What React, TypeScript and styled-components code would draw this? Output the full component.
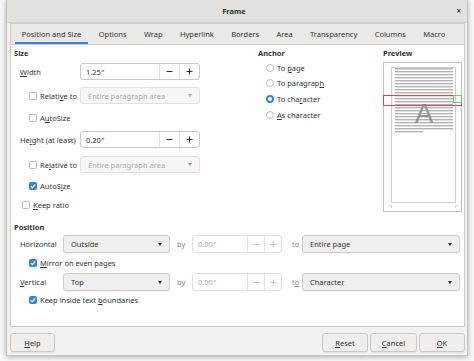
import React from 'react';
import styled, { createGlobalStyle } from 'styled-components';

const Global = createGlobalStyle`
  html, body { margin: 0; padding: 0; }
  body {
    background: #f7f7f7;
    font-family: "Noto Sans", "DejaVu Sans", sans-serif;
    font-size: 7.5px;
    color: #2e3436;
    width: 474px;
    height: 361px;
    overflow: hidden;
  }
`;

const Window = styled.div`
  margin-left: 6px;
  width: 462px;
  height: 356px;
  box-sizing: border-box;
  background: #f2f1f0;
  border: 1px solid #c6c3bf;
  border-top: none;
  box-shadow: 0 1px 5px rgba(0, 0, 0, 0.3);
  display: flex;
  flex-direction: column;
`;

const TitleBar = styled.div`
  height: 22px;
  flex: none;
  display: grid;
  grid-template-columns: 1fr auto 1fr;
  align-items: center;
  background: #e3e1de;
  border-bottom: 1px solid #d4d1cd;
  padding-right: 6px;
`;

const Title = styled.div`
  font-weight: 700;
  font-size: 7.5px;
  grid-column: 2;
`;

const Close = styled.div`
  justify-self: end;
  font-weight: 700;
  font-size: 8px;
  line-height: 8px;
`;

const Notebook = styled.div`
  height: 304px;
  flex: none;
  margin: 0 2px 0 3px;
  box-sizing: border-box;
  border: 1px solid #cfcbc7;
  display: flex;
  flex-direction: column;
`;

const TabStrip = styled.div`
  height: 20px;
  flex: none;
  display: flex;
  background: #ebe9e6;
  border-bottom: 1px solid #d2cfcb;
`;

const Tab = styled.div<{ $active?: boolean }>`
  margin-left: 4px;
  padding: 0 6.7px;
  display: flex;
  align-items: center;
  box-sizing: border-box;
  height: 20px;
  border-bottom: 2px solid ${p => (p.$active ? '#3584e4' : 'transparent')};
  padding-top: 2px;
  color: #2e3436;
  white-space: nowrap;
`;

const Content = styled.div`
  flex: 1;
  background: #ffffff;
  padding: 2px 3px 0 3px;
  display: flex;
  flex-direction: column;
`;

const TopSection = styled.div`
  display: grid;
  grid-template-columns: 244px 125px 78px;
`;

const Column = styled.div`
  display: flex;
  flex-direction: column;
`;

const Heading = styled.div<{ $mt?: number }>`
  font-weight: 700;
  height: 12px;
  line-height: 12px;
  margin-top: ${p => p.$mt ?? 0}px;
`;

const Row = styled.div<{ $mt: number; $h: number; $indent: number }>`
  display: flex;
  align-items: center;
  height: ${p => p.$h}px;
  margin-top: ${p => p.$mt}px;
  padding-left: ${p => p.$indent}px;
  white-space: nowrap;
`;

const FieldLabel = styled.span<{ $w: number; $pl?: number; $muted?: boolean }>`
  width: ${p => p.$w}px;
  padding-left: ${p => p.$pl ?? 0}px;
  box-sizing: border-box;
  flex: none;
  color: ${p => (p.$muted ? '#8b8883' : '#2e3436')};
`;

const U = styled.span`
  text-decoration: underline;
  text-underline-offset: 1px;
  text-decoration-thickness: 0.6px;
`;

const Spin = styled.div<{ $w: number; $disabled?: boolean }>`
  width: ${p => p.$w}px;
  height: 100%;
  box-sizing: border-box;
  display: flex;
  border: 1px solid ${p => (p.$disabled ? '#e0ddda' : '#cdc9c5')};
  border-radius: 3px;
  background: #ffffff;
  flex: none;
`;

const SpinText = styled.div<{ $disabled?: boolean }>`
  flex: 1;
  display: flex;
  align-items: center;
  padding-left: 5px;
  color: ${p => (p.$disabled ? '#b3afab' : '#2e3436')};
`;

const SpinButton = styled.div<{ $w: number }>`
  width: ${p => p.$w}px;
  border-left: 1px solid #e3e0dd;
  display: flex;
  align-items: center;
  justify-content: center;
`;

const Select = styled.div<{ $w: number; $disabled?: boolean }>`
  width: ${p => p.$w}px;
  height: 100%;
  box-sizing: border-box;
  flex: none;
  display: flex;
  align-items: center;
  justify-content: space-between;
  padding: 0 7px;
  border: 1px solid ${p => (p.$disabled ? '#e2dfdc' : '#cfcbc7')};
  border-radius: 3px;
  background: ${p => (p.$disabled ? '#f7f6f5' : '#f1efed')};
  box-shadow: ${p => (p.$disabled ? 'none' : '0 1px 0 rgba(0,0,0,0.05)')};
  color: ${p => (p.$disabled ? '#aeaaa6' : '#2e3436')};
`;

const Arrow = styled.span<{ $disabled?: boolean }>`
  width: 0;
  height: 0;
  border-left: 2.5px solid transparent;
  border-right: 2.5px solid transparent;
  border-top: 3px solid ${p => (p.$disabled ? '#a8a5a1' : '#2e3436')};
`;

const CheckWrap = styled.span<{ $w?: number }>`
  display: inline-flex;
  align-items: center;
  gap: 3px;
  width: ${p => (p.$w ? `${p.$w}px` : 'auto')};
  flex: none;
`;

const Box = styled.span<{ $checked?: boolean }>`
  width: 8px;
  height: 8px;
  box-sizing: border-box;
  border-radius: 1.5px;
  border: 1px solid ${p => (p.$checked ? '#3584e4' : '#bdb9b5')};
  background: ${p => (p.$checked ? '#3584e4' : '#ffffff')};
  display: inline-flex;
  align-items: center;
  justify-content: center;
  flex: none;
`;

const RadioList = styled.div`
  display: flex;
  flex-direction: column;
  padding-top: 1px;
`;

const RadioRow = styled.div`
  height: 15.6px;
  display: flex;
  align-items: center;
  gap: 3px;
  padding-left: 8px;
  white-space: nowrap;
`;

const RadioDot = styled.span<{ $checked?: boolean }>`
  width: 8px;
  height: 8px;
  box-sizing: border-box;
  border-radius: 50%;
  border: ${p => (p.$checked ? '2.5px solid #3584e4' : '1px solid #c4c0bc')};
  background: #ffffff;
  flex: none;
`;

const PreviewBox = styled.div`
  margin-top: 3px;
  width: 79px;
  height: 150px;
`;

const Footer = styled.div`
  height: 28px;
  flex: none;
  display: flex;
  justify-content: space-between;
  align-items: flex-start;
  padding: 6px 2px 0 3px;
  box-sizing: border-box;
`;

const ButtonGroup = styled.div`
  display: flex;
  gap: 2px;
`;

const Button = styled.div<{ $w: number }>`
  width: ${p => p.$w}px;
  height: 19px;
  box-sizing: border-box;
  border: 1px solid #cdc8c3;
  border-radius: 3px;
  background: #f0eeec;
  box-shadow: 0 1px 0 rgba(0, 0, 0, 0.06);
  display: flex;
  align-items: center;
  justify-content: center;
`;

const Minus = ({ c }: { c: string }) => (
  <svg width="7" height="7" viewBox="0 0 7 7">
    <path d="M0.5 3.5 H6.5" stroke={c} strokeWidth="1.1" />
  </svg>
);

const Plus = ({ c }: { c: string }) => (
  <svg width="7" height="7" viewBox="0 0 7 7">
    <path d="M0.5 3.5 H6.5 M3.5 0.5 V6.5" stroke={c} strokeWidth="1.1" />
  </svg>
);

const CheckMark = () => (
  <svg width="6" height="6" viewBox="0 0 6 6">
    <path d="M0.8 3.1 L2.4 4.6 L5.2 1.3" fill="none" stroke="#fff" strokeWidth="1.2" />
  </svg>
);

const Check = ({ checked, w, children }: { checked?: boolean; w?: number; children: React.ReactNode }) => (
  <CheckWrap $w={w}>
    <Box $checked={checked}>{checked && <CheckMark />}</Box>
    <span>{children}</span>
  </CheckWrap>
);

const SpinField = ({ w, bw, value, disabled }: { w: number; bw: number; value: string; disabled?: boolean }) => {
  const c = disabled ? '#c9c5c1' : '#2e3436';
  return (
    <Spin $w={w} $disabled={disabled}>
      <SpinText $disabled={disabled}>{value}</SpinText>
      <SpinButton $w={bw}><Minus c={c} /></SpinButton>
      <SpinButton $w={bw}><Plus c={c} /></SpinButton>
    </Spin>
  );
};

const Dropdown = ({ w, value, disabled }: { w: number; value: string; disabled?: boolean }) => (
  <Select $w={w} $disabled={disabled}>
    <span>{value}</span>
    <Arrow $disabled={disabled} />
  </Select>
);

const Preview = () => {
  const lines: number[] = [];
  for (let y = 6; y <= 66; y += 3) lines.push(y);
  return (
    <PreviewBox>
      <svg width="79" height="150" viewBox="0 0 79 150">
        <rect x="0.5" y="0.5" width="78" height="149" fill="#fff" stroke="#c2c2c2" />
        <rect x="8.5" y="5.5" width="64" height="135" fill="#fff" stroke="#cfcfcf" />
        {lines.map(y => (
          <rect key={y} x="12" y={y} width="58" height="1.4" fill="#b3b3b3" />
        ))}
        <rect x="12" y="69" width="28" height="1.4" fill="#b3b3b3" />
        <text x="41" y="61" textAnchor="middle" fontFamily="'Liberation Sans', sans-serif" fontWeight="300" fontSize="28" fill="#808080" fillOpacity="0.8">A</text>
        <rect x="0.5" y="33.5" width="78" height="10" fill="none" stroke="#e5414f" />
        <rect x="70.5" y="33.5" width="8" height="7" fill="none" stroke="#5fd35f" />
        <path d="M6 143.5 H8.5 V146" fill="none" stroke="#d6d6d6" />
        <path d="M75 143.5 H72.5 V146" fill="none" stroke="#d6d6d6" />
      </svg>
    </PreviewBox>
  );
};

export default function App() {
  return (
    <>
      <Global />
      <Window>
        <TitleBar>
          <Title>Frame</Title>
          <Close>×</Close>
        </TitleBar>
        <Notebook>
          <TabStrip>
            <Tab $active>Position and Size</Tab>
            <Tab>Options</Tab>
            <Tab>Wrap</Tab>
            <Tab>Hyperlink</Tab>
            <Tab>Borders</Tab>
            <Tab>Area</Tab>
            <Tab>Transparency</Tab>
            <Tab>Columns</Tab>
            <Tab>Macro</Tab>
          </TabStrip>
          <Content>
            <TopSection>
              <Column>
                <Heading>Size</Heading>
                <Row $mt={4} $h={17} $indent={6}>
                  <FieldLabel $w={60}><U>W</U>idth</FieldLabel>
                  <SpinField w={120} bw={19} value={'1.25″'} />
                </Row>
                <Row $mt={7} $h={17} $indent={15}>
                  <Check w={51}>Relati<U>v</U>e to</Check>
                  <Dropdown w={120} value="Entire paragraph area" disabled />
                </Row>
                <Row $mt={8} $h={12} $indent={15}>
                  <Check>A<U>u</U>toSize</Check>
                </Row>
                <Row $mt={7} $h={17} $indent={6}>
                  <FieldLabel $w={60}>He<U>i</U>ght (at least)</FieldLabel>
                  <SpinField w={120} bw={19} value={'0.20″'} />
                </Row>
                <Row $mt={8} $h={17} $indent={15}>
                  <Check w={51}>Re<U>l</U>ative to</Check>
                  <Dropdown w={120} value="Entire paragraph area" disabled />
                </Row>
                <Row $mt={7} $h={12} $indent={15}>
                  <Check checked>AutoS<U>i</U>ze</Check>
                </Row>
                <Row $mt={7} $h={12} $indent={8}>
                  <Check><U>K</U>eep ratio</Check>
                </Row>
              </Column>
              <Column>
                <Heading>Anchor</Heading>
                <RadioList>
                  <RadioRow><RadioDot /><span>To <U>p</U>age</span></RadioRow>
                  <RadioRow><RadioDot /><span>To paragrap<U>h</U></span></RadioRow>
                  <RadioRow><RadioDot $checked /><span>To cha<U>r</U>acter</span></RadioRow>
                  <RadioRow><RadioDot /><span><U>A</U>s character</span></RadioRow>
                </RadioList>
              </Column>
              <Column>
                <Heading>Preview</Heading>
                <Preview />
              </Column>
            </TopSection>
            <Heading $mt={9}>Position</Heading>
            <Row $mt={2} $h={18} $indent={6}>
              <FieldLabel $w={43}>Horizontal</FieldLabel>
              <Dropdown w={107} value="Outside" />
              <FieldLabel $w={22} $pl={7} $muted>by</FieldLabel>
              <SpinField w={90} bw={16} value={'0.00″'} disabled />
              <FieldLabel $w={20} $pl={10} $muted>to</FieldLabel>
              <Dropdown w={158} value="Entire page" />
            </Row>
            <Row $mt={4} $h={12} $indent={15}>
              <Check checked><U>M</U>irror on even pages</Check>
            </Row>
            <Row $mt={4} $h={18} $indent={6}>
              <FieldLabel $w={43}><U>V</U>ertical</FieldLabel>
              <Dropdown w={107} value="Top" />
              <FieldLabel $w={22} $pl={7} $muted>by</FieldLabel>
              <SpinField w={90} bw={16} value={'0.00″'} disabled />
              <FieldLabel $w={20} $pl={10} $muted>t<U>o</U></FieldLabel>
              <Dropdown w={158} value="Character" />
            </Row>
            <Row $mt={3} $h={12} $indent={15}>
              <Check checked>Keep inside text <U>b</U>oundaries</Check>
            </Row>
          </Content>
        </Notebook>
        <Footer>
          <Button $w={45}><span><U>H</U>elp</span></Button>
          <ButtonGroup>
            <Button $w={46}><span><U>R</U>eset</span></Button>
            <Button $w={47}><span><U>C</U>ancel</span></Button>
            <Button $w={46}><span><U>O</U>K</span></Button>
          </ButtonGroup>
        </Footer>
      </Window>
    </>
  );
}
